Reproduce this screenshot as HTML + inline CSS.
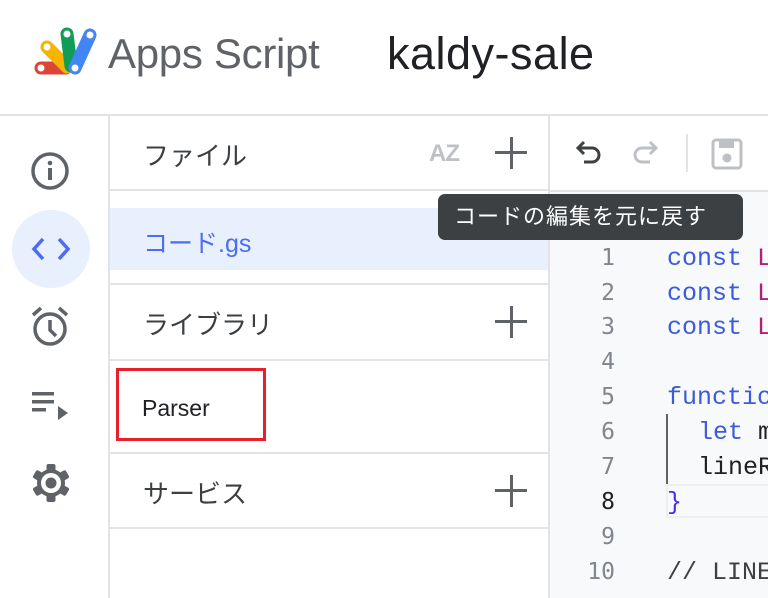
<!DOCTYPE html>
<html><head><meta charset="utf-8"><style>
*{margin:0;padding:0;box-sizing:border-box}
body{width:768px;height:598px;overflow:hidden;background:#fff;font-family:"Liberation Sans","Noto Sans CJK JP",sans-serif;position:relative;color:#3c4043}
.abs{position:absolute}
.hl{position:absolute;height:2px;background:#e3e3e6}
.plus{position:absolute;width:32px;height:32px}
.plus:before{content:"";position:absolute;left:0;top:14px;width:32px;height:3px;background:#5f6368}
.plus:after{content:"";position:absolute;left:14.5px;top:0;width:3px;height:32px;background:#5f6368}
.t{position:absolute;font-size:26px;color:#3c4043;white-space:nowrap}
.code{position:absolute;font-family:"Liberation Mono","DejaVu Sans Mono",monospace;font-size:25px;white-space:nowrap}
.ln{position:absolute;right:153px;font-family:"DejaVu Sans Mono",monospace;font-size:23px;color:#80868b}
</style></head><body>
<!-- header -->
<svg class="abs" style="left:34px;top:26px" width="66" height="52" viewBox="0 0 66 52">
<g stroke-linecap="round" fill="none">
<line x1="7" y1="42" x2="32" y2="42" stroke="#db4437" stroke-width="13"/>
<line x1="13" y1="21" x2="33" y2="41" stroke="#f4b400" stroke-width="13"/>
<line x1="33" y1="8" x2="37" y2="40" stroke="#0f9d58" stroke-width="13"/>
<line x1="56" y1="9" x2="41" y2="42" stroke="#4285f4" stroke-width="13"/>
</g>
<g fill="#fff"><circle cx="7" cy="42" r="3.5"/><circle cx="13" cy="21" r="3.5"/><circle cx="33" cy="8" r="3.5"/><circle cx="56" cy="9" r="3.5"/><circle cx="41" cy="42" r="3.5"/></g>
</svg>
<div class="t" style="left:108px;top:30px;font-size:42px;color:#5f6368;letter-spacing:-0.3px">Apps Script</div>
<div class="t" style="left:387px;top:28px;font-size:45px;color:#202124;letter-spacing:0.5px">kaldy-sale</div>
<div class="hl" style="left:0;top:114px;width:768px"></div>
<!-- rail -->
<div class="abs" style="left:108px;top:116px;width:2px;height:482px;background:#e3e3e6"></div>
<div class="abs" style="left:548px;top:116px;width:2px;height:482px;background:#e3e3e6"></div>
<svg class="abs" style="left:30px;top:151px" width="40" height="40"><circle cx="20" cy="20" r="17" stroke="#5f6368" stroke-width="3.5" fill="none"/><rect x="18" y="17" width="4" height="12" fill="#5f6368"/><circle cx="20" cy="12" r="2.3" fill="#5f6368"/></svg>
<div class="abs" style="left:12px;top:210px;width:78px;height:78px;border-radius:50%;background:#e8f0fe"></div>
<svg class="abs" style="left:30px;top:235px" width="42" height="28"><path d="M13 4 L4 14 L13 24 M29 4 L38 14 L29 24" stroke="#4a6cf7" stroke-width="3.5" fill="none"/></svg>
<svg class="abs" style="left:28px;top:305px" width="44" height="44"><circle cx="22" cy="24" r="15" stroke="#5f6368" stroke-width="3.5" fill="none"/><path d="M22 15 V25 L28 31" stroke="#5f6368" stroke-width="3.5" fill="none"/><path d="M5 10 L13 3 M39 10 L31 3" stroke="#5f6368" stroke-width="3.5"/></svg>
<svg class="abs" style="left:32px;top:392px" width="40" height="32"><rect x="0" y="0" width="22" height="3.5" fill="#5f6368"/><rect x="0" y="8" width="22" height="3.5" fill="#5f6368"/><rect x="0" y="16" width="14" height="3.5" fill="#5f6368"/><path d="M26 14 L36 21 L26 28Z" fill="#5f6368"/></svg>
<svg class="abs" style="left:30px;top:462px" width="42" height="42" viewBox="0 0 42 42">
<g fill="#5f6368" transform="translate(21 21)">
<rect x="-4.5" y="-19" width="9" height="38" rx="2"/>
<rect x="-4.5" y="-19" width="9" height="38" rx="2" transform="rotate(60)"/>
<rect x="-4.5" y="-19" width="9" height="38" rx="2" transform="rotate(120)"/>
<circle r="14"/>
<circle r="10" fill="#fff"/>
<circle r="5.5"/>
</g></svg>
<!-- file panel -->
<div class="t" style="left:143px;top:136px">ファイル</div>
<div class="abs" style="left:429px;top:140px;font-size:24px;font-weight:bold;color:#bdc1c6;letter-spacing:-1px">AZ</div>
<div class="plus" style="left:495px;top:137px"></div>
<div class="hl" style="left:110px;top:189px;width:438px"></div>
<div class="abs" style="left:110px;top:208px;width:438px;height:62px;background:#e8f0fe"></div>
<div class="t" style="left:143px;top:224px;font-size:25px;color:#4a6cf7">コード.gs</div>
<div class="hl" style="left:110px;top:283px;width:438px"></div>
<div class="t" style="left:143px;top:305px">ライブラリ</div>
<div class="plus" style="left:495px;top:306px"></div>
<div class="hl" style="left:110px;top:359px;width:438px"></div>
<div class="abs" style="left:116px;top:368px;width:150px;height:73px;border:3px solid #e8202a"></div>
<div class="t" style="left:142px;top:395px;font-size:23px;color:#202124">Parser</div>
<div class="hl" style="left:110px;top:452px;width:438px"></div>
<div class="t" style="left:143px;top:474px">サービス</div>
<div class="plus" style="left:495px;top:475px"></div>
<div class="hl" style="left:110px;top:527px;width:438px"></div>
<!-- editor -->
<div class="abs" style="left:550px;top:192px;width:218px;height:406px;background:#f8f9fa"></div>
<div class="hl" style="left:550px;top:190px;width:218px"></div>
<svg class="abs" style="left:574px;top:138px" width="32" height="30"><path d="M10 4 L4 10 L10 16 M4 10 H18 a7 7 0 0 1 0 14 H10" stroke="#3c4043" stroke-width="3" fill="none"/></svg>
<svg class="abs" style="left:630px;top:138px" width="32" height="30"><path d="M20 4 L26 10 L20 16 M26 10 H12 a7 7 0 0 0 0 14 H20" stroke="#bdc1c6" stroke-width="3" fill="none"/></svg>
<div class="abs" style="left:686px;top:134px;width:2px;height:38px;background:#e3e3e6"></div>
<svg class="abs" style="left:711px;top:138px" width="34" height="32"><rect x="2" y="2" width="28" height="28" rx="3" stroke="#bdc1c6" stroke-width="3" fill="none"/><rect x="8" y="3" width="15" height="7" fill="#bdc1c6"/><circle cx="16" cy="20" r="4.5" fill="#bdc1c6"/></svg>
<div class="ln" style="top:245px">1</div>
<div class="ln" style="top:280px">2</div>
<div class="ln" style="top:314px">3</div>
<div class="ln" style="top:349px">4</div>
<div class="ln" style="top:384px">5</div>
<div class="ln" style="top:419px">6</div>
<div class="ln" style="top:454px">7</div>
<div class="ln" style="top:489px;color:#202124">8</div>
<div class="ln" style="top:524px">9</div>
<div class="ln" style="top:559px">10</div>
<div class="code" style="left:667px;top:244px;color:#3b5bdb">const <span style="color:#b0217a">L</span></div>
<div class="code" style="left:667px;top:279px;color:#3b5bdb">const <span style="color:#b0217a">L</span></div>
<div class="code" style="left:667px;top:313px;color:#3b5bdb">const <span style="color:#b0217a">L</span></div>
<div class="code" style="left:667px;top:383px;color:#3b5bdb">function</div>
<div class="abs" style="left:666px;top:414px;width:2px;height:70px;background:#5f6368"></div>
<div class="code" style="left:698px;top:418px;color:#3b5bdb">let <span style="color:#202124">m</span></div>
<div class="code" style="left:698px;top:453px;color:#202124">lineR</div>
<div class="abs" style="left:666px;top:484px;width:102px;height:34px;border-top:2px solid #eceef0;border-bottom:2px solid #eceef0;border-left:2px solid #eceef0"></div>
<div class="code" style="left:667px;top:488px;color:#4a2cf0">}</div>
<div class="code" style="left:667px;top:558px;color:#3c4043">// LINE</div>
<!-- tooltip -->
<div class="abs" style="left:438px;top:194px;width:305px;height:46px;background:#3c4043;border-radius:7px;color:#fff;font-size:22px;line-height:46px;padding-left:16px;white-space:nowrap;letter-spacing:1px">コードの編集を元に戻す</div>
</body></html>
